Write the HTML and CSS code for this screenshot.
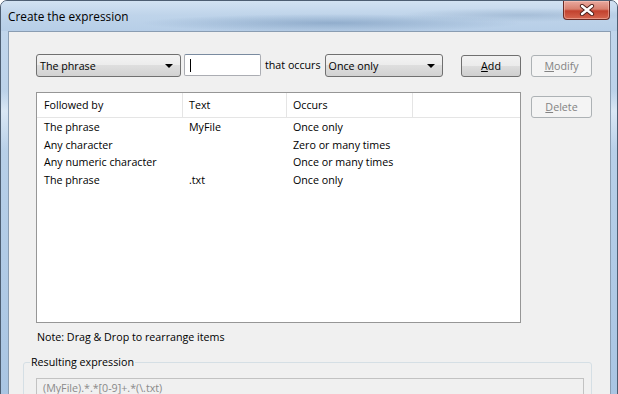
FILE: index.html
```html
<!DOCTYPE html>
<html lang="en">
<head>
    <meta charset="UTF-8">
    <title>Create the expression</title>
    <link rel="stylesheet" href="styles.css">
</head>
<body>
    <div class="window">
        <div class="titlebar">
            <span class="title">Create the expression</span>
            <span class="close-btn">
                <svg width="16" height="12" viewBox="0 0 16 12">
                    <path d="M3 2 L13 10 M13 2 L3 10" stroke="#4a1d18" stroke-width="4.2" stroke-linecap="round"/>
                    <path d="M3 2 L13 10 M13 2 L3 10" stroke="#ffffff" stroke-width="2.4" stroke-linecap="round"/>
                </svg>
            </span>
        </div>

        <div class="client">
            <div class="editor">
                <div class="build-row">
                    <div class="combo combo-type">
                        <span>The phrase</span>
                        <i class="arrow"></i>
                    </div>
                    <div class="textbox"><span class="caret"></span></div>
                    <span class="occurs-label">that occurs</span>
                    <div class="combo combo-occurs">
                        <span>Once only</span>
                        <i class="arrow"></i>
                    </div>
                    <button class="btn btn-add"><u>A</u>dd</button>
                </div>
                <div class="side">
                    <button class="btn" disabled><u>M</u>odify</button>
                </div>

                <div class="listview">
                    <div class="lv-row lv-header">
                        <span>Followed by</span>
                        <span>Text</span>
                        <span>Occurs</span>
                        <span></span>
                    </div>
                    <div class="lv-row">
                        <span>The phrase</span>
                        <span>MyFile</span>
                        <span>Once only</span>
                    </div>
                    <div class="lv-row">
                        <span>Any character</span>
                        <span></span>
                        <span>Zero or many times</span>
                    </div>
                    <div class="lv-row">
                        <span>Any numeric character</span>
                        <span></span>
                        <span>Once or many times</span>
                    </div>
                    <div class="lv-row">
                        <span>The phrase</span>
                        <span>.txt</span>
                        <span>Once only</span>
                    </div>
                </div>
                <div class="side side-list">
                    <button class="btn" disabled><u>D</u>elete</button>
                </div>
            </div>

            <p class="note">Note: Drag &amp; Drop to rearrange items</p>

            <fieldset class="result">
                <legend>Resulting expression</legend>
                <div class="result-box">(MyFile).*.*[0-9]+.*(\.txt)</div>
            </fieldset>
        </div>
    </div>
</body>
</html>
```

FILE: styles.css
```css
/* Windows 7 style dialog */
body {
    margin: 0;
    font-family: "Open Sans", "Noto Sans", sans-serif;
    font-size: 10.7px;
    color: #000;
    background: #fff;
    overflow: hidden;
}

.window {
    width: 618px;
    height: 420px;
    box-sizing: border-box;
    border: 1px solid #4d5e72;
    border-radius: 7px 7px 0 0;
    background:
        linear-gradient(180deg, rgba(255,255,255,0) 90px, rgba(230,240,250,0.7) 110px, rgba(255,255,255,0) 150px),
        linear-gradient(180deg, #c3d7ec 0, #b4cde7 200px, #a9c5e3 400px);
}

/* title bar */
.titlebar {
    display: flex;
    align-items: flex-start;
    height: 30px;
    background:
        radial-gradient(ellipse 190px 9px at 330px 22px, rgba(95,130,170,0.45), rgba(95,130,170,0)),
        radial-gradient(ellipse 120px 7px at 520px 14px, rgba(110,140,175,0.3), rgba(110,140,175,0)),
        linear-gradient(180deg, #d2e2f2 0, #bfd4ea 14px, #b7cee7 30px);
    border-radius: 6px 6px 0 0;
}

.title {
    padding: 7px 0 0 7px;
    font-size: 11.8px;
    line-height: 16px;
    color: #000;
}

.close-btn {
    margin-left: auto;
    margin-right: 7px;
    width: 47px;
    height: 19px;
    box-sizing: border-box;
    border: 1px solid #6b2b25;
    border-top: none;
    border-radius: 0 0 4px 4px;
    background: linear-gradient(180deg, #e9a99f 0, #d8806f 45%, #c2412e 55%, #d5664f 100%);
    display: flex;
    align-items: center;
    justify-content: center;
    box-shadow: inset 0 0 0 1px rgba(255,210,200,0.45);
}

.close-btn svg {
    display: block;
}

/* client area */
.client {
    margin: 0 6px 0 7px;
    height: 400px;
    background: #f0f0f0;
    border: 1px solid #8a9db2;
    overflow: hidden;
}

.editor {
    display: grid;
    grid-template-columns: 485px 60px;
    column-gap: 10px;
    row-gap: 15px;
    margin: 22px 0 0 27px;
}

.build-row {
    display: flex;
    align-items: flex-start;
    height: 23px;
}

.combo {
    height: 23px;
    box-sizing: border-box;
    border: 1px solid #707070;
    border-radius: 3px;
    background: linear-gradient(180deg, #f3f3f3 0, #ececec 50%, #dedede 50%, #d2d2d2 100%);
    display: flex;
    align-items: center;
    padding: 1px 7px 0 3px;
    line-height: 15px;
}

.combo span {
    flex: 1;
}

.combo .arrow {
    width: 0;
    height: 0;
    border-left: 4px solid transparent;
    border-right: 4px solid transparent;
    border-top: 4px solid #000;
}

.combo-type {
    width: 145px;
}

.combo-occurs {
    width: 118px;
}

.textbox {
    width: 77px;
    height: 22px;
    box-sizing: border-box;
    margin-left: 3px;
    border: 1px solid #abadb3;
    border-top-color: #7a8ba0;
    border-radius: 2px;
    background: #fff;
    padding: 4px 0 0 5px;
}

.caret {
    display: block;
    width: 1px;
    height: 13px;
    background: #000;
}

.occurs-label {
    margin: 0 4px;
    line-height: 23px;
}

.btn {
    height: 22px;
    box-sizing: border-box;
    border: 1px solid #707070;
    border-radius: 3px;
    background: linear-gradient(180deg, #f2f2f2 0, #ebebeb 50%, #dddddd 50%, #cfcfcf 100%);
    font: inherit;
    color: #000;
    padding: 0;
    margin-top: 1px;
}

.btn:disabled {
    border-color: #adb2b5;
    background: #f4f4f4;
    color: #838383;
}

.btn-add {
    margin-left: auto;
    width: 60px;
}

.side .btn {
    width: 61px;
}

.side-list .btn {
    margin-top: 4px;
}

/* list view */
.listview {
    height: 231px;
    box-sizing: border-box;
    border: 1px solid #969696;
    background: #fff;
}

.lv-row {
    display: grid;
    grid-template-columns: 146px 104px 126px 1fr;
    height: 17.7px;
    line-height: 17.7px;
}

.lv-row span {
    padding-left: 7px;
    white-space: nowrap;
}

.lv-row span + span {
    padding-left: 6px;
}

.lv-header {
    height: 24px;
    line-height: 24px;
    border-bottom: 1px solid #e5e5e5;
    margin-bottom: 1px;
}

.lv-header span {
    border-right: 1px solid #e5e5e5;
}

.lv-header span:last-child {
    border-right: none;
}

.note {
    margin: 7px 0 0 28px;
    line-height: 15px;
}

/* group box */
.result {
    margin: 10px 0 0 14px;
    width: 569px;
    box-sizing: border-box;
    border: 1px solid #d5dfe5;
    border-radius: 3px;
    padding: 0 7px 10px 12px;
}

.result legend {
    margin-left: -6px;
    padding: 0 1px;
    line-height: 15px;
}

.result-box {
    margin-top: 8px;
    width: 548px;
    height: 22px;
    box-sizing: border-box;
    border: 1px solid #c2c2c2;
    background: #f0f0f0;
    color: #8a8a8a;
    padding: 0 0 0 6px;
    line-height: 19px;
}
```
